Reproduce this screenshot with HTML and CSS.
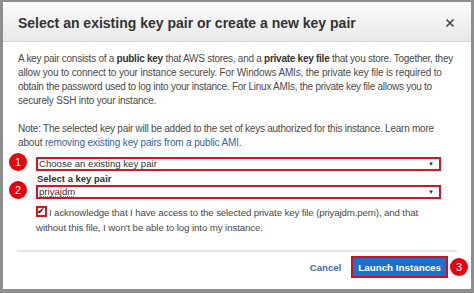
FILE: index.html
```html
<!DOCTYPE html>
<html>
<head>
<meta charset="utf-8">
<link rel="stylesheet" href="styles.css">
</head>
<body>
<div class="modal">
  <div class="header">
    <h1 class="title">Select an existing key pair or create a new key pair</h1>
    <svg class="close" width="10" height="10" viewBox="0 0 10 10"><path d="M1.5 1.5 L8.5 8.5 M8.5 1.5 L1.5 8.5" stroke="#444" stroke-width="1.6" fill="none"/></svg>
  </div>
  <div class="content">
    <p class="para"><span class="l1">A key pair consists of a <b>public key</b> that AWS stores, and a <b>private key file</b> that you store. Together, they</span><br><span class="l2">allow you to connect to your instance securely. For Windows AMIs, the private key file is required to</span><br><span class="l3">obtain the password used to log into your instance. For Linux AMIs, the private key file allows you to</span><br><span class="l4">securely SSH into your instance.</span></p>
    <p class="para note"><span class="n1">Note: The selected key pair will be added to the set of keys authorized for this instance. Learn more</span><br><span class="n2">about <a class="link">removing existing key pairs from a public AMI</a>.</span></p>
    <div class="form">
      <div class="field">
        <span class="badge badge-1">1</span>
        <div class="select"><span>Choose an existing key pair</span><span class="arrow">▼</span></div>
      </div>
      <div class="label">Select a key pair</div>
      <div class="field">
        <span class="badge badge-2">2</span>
        <div class="select"><span class="spell">priyajdm</span><span class="arrow">▼</span></div>
      </div>
      <div class="ack">
        <span class="checkbox"><span class="check">✔</span></span><span class="a1">I acknowledge that I have access to the selected private key file (priyajdm.pem), and that</span><br><span class="a2">without this file, I won't be able to log into my instance.</span>
      </div>
    </div>
  </div>
  <div class="divider"></div>
  <div class="footer">
    <a class="cancel">Cancel</a>
    <button class="launch">Launch Instances</button>
    <span class="badge badge-3">3</span>
  </div>
</div>
</body>
</html>
```
FILE: styles.css
```css
html, body {
  margin: 0;
  padding: 0;
}
body {
  background: #8e8e8e;
  width: 474px;
  height: 293px;
  padding: 2px 3px 4px 3px;
  box-sizing: border-box;
  font-family: "Liberation Sans", Arial, sans-serif;
  overflow: hidden;
}
.modal {
  background: #fff;
  height: 287px;
  display: flex;
  flex-direction: column;
  position: relative;
}
.header {
  height: 40px;
  box-sizing: border-box;
  background: linear-gradient(#fbfbfb, #e8e8e8);
  border-bottom: 1px solid #d6d6d6;
  display: flex;
  align-items: center;
  justify-content: space-between;
  padding: 2px 16px 0 15px;
}
.title {
  margin: 0;
  font-size: 14px;
  font-weight: bold;
  color: #333;
}
.close {
  display: block;
}
.content {
  padding: 10px 4px 0 15px;
  color: #4a4a4a;
  font-size: 10px;
  line-height: 14px;
  white-space: nowrap;
}
.para {
  margin: 0 0 14px 0;
}
.para b {
  color: #333;
}
.l1 { letter-spacing: -0.26px; }
.l2 { letter-spacing: -0.15px; }
.l3 { letter-spacing: -0.27px; }
.l4 { letter-spacing: -0.2px; }
.n1 { letter-spacing: -0.24px; }
.n2 { letter-spacing: -0.15px; }
.note {
  margin-bottom: 7px;
}
.link {
  color: #3762a8;
}
.form {
  padding-left: 18px;
  padding-right: 26px;
}
.field {
  position: relative;
}
.select {
  height: 14px;
  box-sizing: border-box;
  border: 2px solid #e0101e;
  display: flex;
  justify-content: space-between;
  align-items: center;
  padding: 0 5px 0 1px;
  color: #333;
  font-size: 9.6px;
  line-height: 10px;
}
.arrow {
  font-size: 6px;
  color: #333;
}
.spell {
  text-decoration: underline dotted #c77;
}
.label {
  font-weight: bold;
  color: #333;
  font-size: 9.5px;
  line-height: 13px;
  margin-top: 1px;
  margin-left: 1px;
}
.badge {
  position: absolute;
  width: 18px;
  height: 18px;
  border-radius: 50%;
  background: #e8000b;
  color: #fff;
  font-size: 11px;
  line-height: 18px;
  text-align: center;
}
.badge-1, .badge-2 {
  left: -27px;
  top: -4px;
}
.badge-3 {
  right: 3px;
  top: 6px;
}
.ack {
  margin-top: 6px;
  font-size: 9.7px;
  line-height: 15px;
  color: #4a4a4a;
}
.a1 { letter-spacing: -0.13px; }
.a2 { letter-spacing: -0.1px; }
.checkbox {
  display: inline-block;
  vertical-align: -1px;
  width: 7px;
  height: 7px;
  border: 2px solid #e0101e;
  background: #f2f2f2;
  margin-right: 2px;
  position: relative;
}
.check {
  position: absolute;
  left: -1px;
  top: -4px;
  font-size: 9px;
  color: #222;
}
.divider {
  margin: 15px 14px 0 14px;
  height: 2px;
  background: #e4e4e4;
}
.footer {
  position: relative;
  display: flex;
  justify-content: flex-end;
  align-items: center;
  gap: 10px;
  padding: 4px 23px 0 0;
}
.cancel {
  color: #3a6db3;
  font-weight: bold;
  font-size: 9.6px;
}
.launch {
  height: 22px;
  padding: 0 5px;
  background: #1c6fcb;
  border: 2px solid #d0101a;
  color: #fff;
  font-family: "Liberation Sans", Arial, sans-serif;
  font-weight: bold;
  font-size: 9.8px;
}
```
